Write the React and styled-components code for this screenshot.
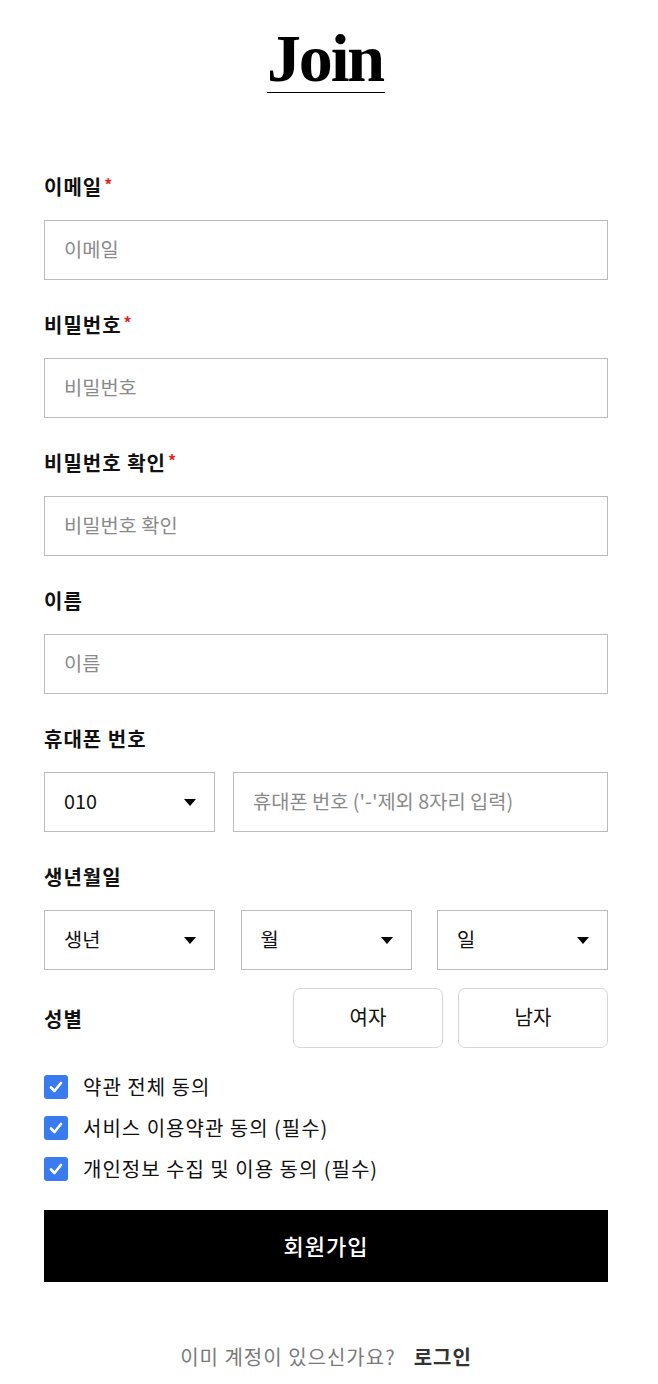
import React from "react";
import styled, { createGlobalStyle } from "styled-components";

const Global = createGlobalStyle`
  html, body { margin: 0; padding: 0; background: #fff; }
  body { font-family: "Noto Sans CJK KR", "Noto Sans", sans-serif; color: #111; }
  * { box-sizing: border-box; }
`;

const Page = styled.div`
  width: 564px;
  margin-left: 44px;
  padding-top: 24px;
  padding-bottom: 40px;
  display: flex;
  flex-direction: column;
`;

const TitleWrap = styled.div`
  display: flex;
  justify-content: center;
  margin-bottom: 82px;
`;

const Title = styled.h1`
  margin: 0;
  font-family: "Liberation Serif", "DejaVu Serif", serif;
  font-weight: 700;
  font-size: 68px;
  line-height: 68px;
  letter-spacing: -2.2px;
  color: #000;
  border-bottom: 1px solid #000;
  padding: 0 2px 0 0;
`;

const Field = styled.div`
  display: flex;
  flex-direction: column;
  margin-bottom: ${(p) => p.$mb ?? 33}px;
`;

const Label = styled.label`
  font-size: 20px;
  line-height: 24px;
  height: 24px;
  font-weight: 700;
  letter-spacing: 1px;
  color: #111;
  margin-bottom: 21px;
  display: flex;
  align-items: flex-start;
`;

const Req = styled.span`
  color: #e8231d;
  font-size: 16px;
  line-height: 18px;
  margin-left: 2px;
`;

const Input = styled.input`
  height: 60px;
  width: 100%;
  border: 1px solid #bcbcbc;
  border-radius: 0;
  padding: 0 19px 4px;
  font-family: inherit;
  font-size: 19.8px;
  color: #111;
  outline: none;
  &::placeholder { color: #8a8a8a; }
`;

const PhoneRow = styled.div`
  display: grid;
  grid-template-columns: 171px 1fr;
  column-gap: 18px;
`;

const BirthRow = styled.div`
  display: grid;
  grid-template-columns: repeat(3, 1fr);
  column-gap: 25.5px;
`;

const Select = styled.div`
  height: 60px;
  border: 1px solid #bcbcbc;
  padding: 0 18px 3px 19px;
  display: flex;
  align-items: center;
  justify-content: space-between;
  font-size: 19.8px;
  color: #111;
`;

const Caret = styled.span`
  width: 0;
  height: 0;
  margin-top: 3px;
  border-left: 6.5px solid transparent;
  border-right: 6.5px solid transparent;
  border-top: 7px solid #000;
`;

const GenderRow = styled.div`
  display: flex;
  align-items: center;
  margin-top: 18px;
  margin-bottom: 27px;
`;

const GenderLabel = styled.span`
  font-size: 20px;
  font-weight: 700;
  letter-spacing: 1px;
  flex: 1;
`;

const GenderButtons = styled.div`
  display: flex;
  gap: 15px;
`;

const GenderButton = styled.button`
  width: 150px;
  height: 60px;
  border: 1px solid #d6d6d6;
  border-radius: 7px;
  background: #fff;
  padding: 0 0 3px;
  font-family: inherit;
  font-size: 20px;
  color: #111;
`;

const Checks = styled.div`
  display: flex;
  flex-direction: column;
  gap: 17px;
  margin-bottom: 29px;
`;

const CheckRow = styled.label`
  display: flex;
  align-items: center;
  gap: 15px;
  height: 24px;
  font-size: 20px;
  line-height: 24px;
  color: #111;
  letter-spacing: 1px;
`;

const Box = styled.span`
  width: 24px;
  height: 24px;
  border-radius: 3px;
  background: #3a7bef;
  display: flex;
  align-items: center;
  justify-content: center;
  flex: none;
`;

const Submit = styled.button`
  height: 72px;
  width: 100%;
  border: none;
  background: #000;
  color: #fff;
  padding: 0 0 3px;
  font-family: inherit;
  font-size: 22px;
  letter-spacing: 1px;
  font-weight: 500;
  margin-bottom: 63px;
`;

const Footer = styled.div`
  display: flex;
  justify-content: center;
  align-items: center;
  gap: 18px;
  height: 24px;
  font-size: 20px;
  line-height: 24px;
  letter-spacing: 1px;
`;

const Muted = styled.span`
  color: #7a7a7a;
`;

const LoginLink = styled.a`
  color: #333;
  font-weight: 700;
  text-decoration: none;
`;

const Check = () => (
  <Box>
    <svg width="16" height="16" viewBox="0 0 16 16" fill="none">
      <path d="M3 8.5 L6.5 12 L13 4" stroke="#fff" strokeWidth="2.6" strokeLinecap="round" strokeLinejoin="round" />
    </svg>
  </Box>
);

const fields = [
  { label: "이메일", req: true, ph: "이메일", type: "email" },
  { label: "비밀번호", req: true, ph: "비밀번호", type: "password" },
  { label: "비밀번호 확인", req: true, ph: "비밀번호 확인", type: "password" },
  { label: "이름", req: false, ph: "이름", type: "text" },
];

export default function App() {
  return (
    <>
      <Global />
      <Page>
        <TitleWrap>
          <Title>Join</Title>
        </TitleWrap>
        {fields.map((f) => (
          <Field key={f.label}>
            <Label>
              {f.label}
              {f.req && <Req>*</Req>}
            </Label>
            <Input type={f.type} placeholder={f.ph} />
          </Field>
        ))}
        <Field>
          <Label>휴대폰 번호</Label>
          <PhoneRow>
            <Select>
              010
              <Caret />
            </Select>
            <Input placeholder="휴대폰 번호 ('-'제외 8자리 입력)" />
          </PhoneRow>
        </Field>
        <Field $mb={0}>
          <Label>생년월일</Label>
          <BirthRow>
            {["생년", "월", "일"].map((t) => (
              <Select key={t}>
                {t}
                <Caret />
              </Select>
            ))}
          </BirthRow>
        </Field>
        <GenderRow>
          <GenderLabel>성별</GenderLabel>
          <GenderButtons>
            <GenderButton>여자</GenderButton>
            <GenderButton>남자</GenderButton>
          </GenderButtons>
        </GenderRow>
        <Checks>
          {["약관 전체 동의", "서비스 이용약관 동의 (필수)", "개인정보 수집 및 이용 동의 (필수)"].map((t) => (
            <CheckRow key={t}>
              <Check />
              {t}
            </CheckRow>
          ))}
        </Checks>
        <Submit>회원가입</Submit>
        <Footer>
          <Muted>이미 계정이 있으신가요?</Muted>
          <LoginLink href="#">로그인</LoginLink>
        </Footer>
      </Page>
    </>
  );
}
